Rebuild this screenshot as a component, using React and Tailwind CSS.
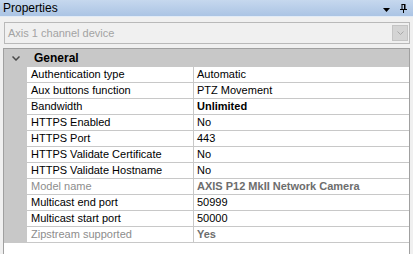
import React from 'react';

const rows = [
  { name: 'Authentication type', value: 'Automatic' },
  { name: 'Aux buttons function', value: 'PTZ Movement' },
  { name: 'Bandwidth', value: 'Unlimited', bold: true },
  { name: 'HTTPS Enabled', value: 'No' },
  { name: 'HTTPS Port', value: '443' },
  { name: 'HTTPS Validate Certificate', value: 'No' },
  { name: 'HTTPS Validate Hostname', value: 'No' },
  { name: 'Model name', value: 'AXIS P12 MkII Network Camera', bold: true, readOnly: true },
  { name: 'Multicast end port', value: '50999' },
  { name: 'Multicast start port', value: '50000' },
  { name: 'Zipstream supported', value: 'Yes', bold: true, readOnly: true },
];

const PropertyRow = ({ name, value, bold, readOnly }) => (
  <div className="flex h-[16px]">
    <div className="w-[23px] shrink-0 bg-[#c8c8c8]" />
    <div
      className={`w-[167px] shrink-0 pl-[4px] border-b border-r border-[#c8c8c8] bg-white leading-[15px] ${
        readOnly ? 'text-[#8d8d8d]' : 'text-black'
      }`}
    >
      {name}
    </div>
    <div
      className={`flex-1 pl-[3px] border-b border-[#c8c8c8] bg-white leading-[15px] whitespace-nowrap overflow-hidden ${
        bold ? 'font-bold' : ''
      } ${readOnly ? 'text-[#6d6d6d]' : 'text-black'}`}
    >
      {value}
    </div>
  </div>
);

export default function App() {
  return (
    <div
      className="w-[413px] h-[254px] overflow-hidden bg-[#f0f0f0] text-[11px]"
      style={{ fontFamily: '"Liberation Sans", Arial, sans-serif' }}
    >
      {/* title bar */}
      <div className="h-[17px] flex items-center justify-between pl-[3px] pr-[6px] bg-gradient-to-b from-[#c6d8ee] to-[#abc4e4] border-b border-[#e2ebf6]">
        <span className="text-[12px] text-black leading-none">Properties</span>
        <div className="flex items-center gap-[10px]">
          <svg width="7" height="4" viewBox="0 0 7 4" className="mt-[3px]">
            <polygon points="0,0 7,0 3.5,4" fill="#000" />
          </svg>
          <svg width="7" height="9" viewBox="0 0 7 9">
            <path d="M1.5 0.5h4M2 0.5v4.5M4.5 0.5v4.5M0 5.5h7M3.5 5.5v3.5" stroke="#000" strokeWidth="1" fill="none" />
            <rect x="4" y="1" width="1.5" height="4" fill="#000" />
          </svg>
        </div>
      </div>

      {/* object selector */}
      <div className="pt-[5px] pl-[4px] pr-[3px]">
        <div className="h-[22px] flex items-center justify-between border border-[#b9b9b9] bg-[#f0f0f0] pl-[3px] pr-[1px]">
          <span className="text-[#a3a3a3] text-[11px]">Axis 1 channel device</span>
          <div className="w-[16px] h-[16px] bg-[#d4d4d4] border border-[#c4c4c4] flex items-center justify-center">
            <svg width="7" height="4" viewBox="0 0 7 4">
              <path d="M0.5 0.5 L3.5 3.5 L6.5 0.5" stroke="#a8a8a8" strokeWidth="1" fill="none" />
            </svg>
          </div>
        </div>
      </div>

      {/* grid */}
      <div className="mt-[4px] ml-[3px] mr-[3px] h-[206px] border-l border-t border-r border-[#a0a0a0] bg-white">
        <div className="h-[18px] flex items-center bg-[#c8c8c8]">
          <svg width="8" height="5" viewBox="0 0 8 5" className="ml-[8px]">
            <path d="M0.5 0.5 L4 4 L7.5 0.5" stroke="#4a4a4a" strokeWidth="1.5" fill="none" />
          </svg>
          <span className="ml-[14px] font-bold text-[12px] text-black">General</span>
        </div>
        {rows.map((r) => (
          <PropertyRow key={r.name} {...r} />
        ))}
      </div>
    </div>
  );
}
